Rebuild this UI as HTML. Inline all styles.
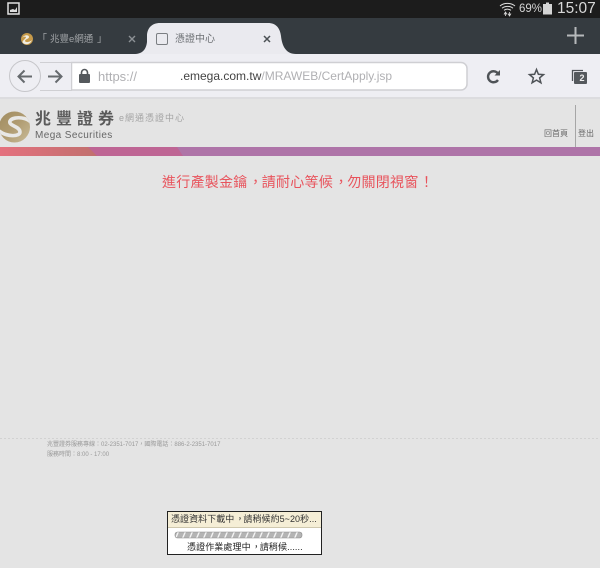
<!DOCTYPE html>
<html lang="zh-Hant"><head><meta charset="utf-8"><style>
html,body{margin:0;padding:0;background:#e4e4e4}
#r{position:relative;width:600px;height:568px;overflow:hidden;background:#e4e4e4;font-family:"Liberation Sans","Noto Sans CJK TC",sans-serif}
#r div{position:absolute;white-space:nowrap}
svg{position:absolute;left:0;top:0}
.c{position:relative;left:1px;top:0}
.d{position:relative;left:1px;top:0}
</style></head><body><div id="r">
<div style="left:0;top:0;width:600px;height:18px;background:#1c1c1c"></div>
<div style="left:0;top:18px;width:600px;height:36px;background:#353b40"></div>
<div style="left:0;top:54px;width:600px;height:44px;background:#eeeef3"></div>
<div style="left:0;top:97px;width:600px;height:2px;background:#dcdcdf"></div>
<svg width="600" height="568" viewBox="0 0 600 568">
<rect x="8" y="3" width="11" height="11" fill="#1c1c1c" stroke="#e2e2e2" stroke-width="1.5"/>
<path d="M10 12V10L13 9L15 10L17 7V12Z" fill="#ddd"/>
<path d="M134 54C142 54 146 50 147 42V36C147 28 152 23 160 23H268C276 23 280 28 281 36C282 46 286 54 296 54Z" fill="#eaeaef"/>
<circle cx="27" cy="39" r="6" fill="#c69a4a"/>
<path d="M22 38C25 34 29 35 29 37C29 39 25 39 25 41C26 43 30 42 32 40C30 45 25 45 23 43C21 41 26 39 26 37C25 36 23 37 22 38Z" fill="#f1ede2"/>
<path d="M129 36L135 42M135 36L129 42" stroke="#8d9195" stroke-width="1.4"/>
<path d="M264 36L270 42M270 36L264 42" stroke="#4b5054" stroke-width="1.5"/>
<rect x="156.500" y="33.500" width="11" height="11" rx="1.500" fill="none" stroke="#7b7e82" stroke-width="1"/>
<path d="M575.500 27V44M567 35.500H584" stroke="#b6b9bb" stroke-width="2"/>
<path d="M71.500 62.500H461a6 6 0 0 1 6 6V84a6 6 0 0 1-6 6H71.500Z" fill="#fff" stroke="#cfcfd3" stroke-width="1.500"/>
<path d="M40 62.500H71.500V90.500H40" fill="#eeeef3" stroke="#cfcfd3"/>
<circle cx="25" cy="76" r="15.500" fill="#eeeef3" stroke="#c6c6ca"/>
<path d="M32 76.500H19M24.500 70.500L18.500 76.500L24.500 82.500" fill="none" stroke="#666a6e" stroke-width="2"/>
<path d="M48 76.500H61M55.500 70.500L61.500 76.500L55.500 82.500" fill="none" stroke="#666a6e" stroke-width="2"/>
<rect x="79" y="74" width="11" height="9" rx="1" fill="#55595d"/>
<path d="M81.500 74V72.500a3 3 0 0 1 6 0V74" fill="none" stroke="#55595d" stroke-width="1.600"/>
<path d="M498 73.500A5.500 5.500 0 1 0 498 80" fill="none" stroke="#4f5357" stroke-width="2.400"/>
<path d="M494.500 75.500H500V70Z" fill="#4f5357"/>
<path d="M536.500 69.500L538.400 74.300L543.500 74.600L539.600 77.900L540.900 82.800L536.500 80.100L532.100 82.800L533.400 77.900L529.500 74.600L534.600 74.300Z" fill="none" stroke="#4f5357" stroke-width="1.500"/>
<path d="M572.500 81V70.500H583" fill="none" stroke="#4f5357" stroke-width="1.300"/>
<rect x="574" y="72" width="13" height="12" rx="1" fill="#55595d"/>
<path d="M500 6C504 2.500 511 2.500 515 6M502 8.300C505 5.800 510 5.800 513 8.300M504 10.300C506 8.800 509 8.800 511 10.300" fill="none" stroke="#ddd" stroke-width="1"/>
<path d="M505.500 12V16M504 14.500L505.500 12L507 14.500M509.500 12V16M508 13.500L509.500 16L511 13.500" fill="none" stroke="#ddd" stroke-width=".8"/>
<rect x="543" y="4" width="9" height="10.500" fill="#d4d4d4"/><rect x="546" y="2.500" width="3" height="1.500" fill="#d4d4d4"/>
<defs><linearGradient id="s" x1="0" x2="1" y1="0" y2="0"><stop offset="0" stop-color="#e4717e"/><stop offset="1" stop-color="#c1706e"/></linearGradient>
<linearGradient id="g" x1="0" x2="1" y1="0" y2="1"><stop offset="0" stop-color="#a08c60"/><stop offset=".5" stop-color="#b09c72"/><stop offset="1" stop-color="#c9bb98"/></linearGradient>
<clipPath id="c"><circle cx="14.500" cy="127" r="15.500"/></clipPath></defs>
<rect x="0" y="147" width="600" height="9" fill="#ae74a8"/>
<path d="M0 147H177L183 156H0Z" fill="#be6594"/>
<path d="M0 147H88L97 156H0Z" fill="url(#s)"/>
<circle cx="14.500" cy="127" r="15.500" fill="url(#g)"/>
<path clip-path="url(#c)" d="M31 122C24 116 12 117 10 121C8 126 20 126 20 132C20 137 7 137 -1 131" fill="none" stroke="#e8e8e6" stroke-width="3.600"/>
<rect x="575" y="105" width="1" height="42" fill="#a6a6a6"/>
<line x1="0" y1="438.500" x2="600" y2="438.500" stroke="#d2d2d2" stroke-dasharray="2 2"/>
<rect x="167.500" y="511.500" width="154" height="43" fill="#fff" stroke="#222" stroke-width="1"/>
<rect x="168" y="512" width="153" height="15" fill="#f5eed6"/>
<line x1="168" y1="527.500" x2="321" y2="527.500" stroke="#cfc8ae"/>
<defs><pattern id="p" width="7" height="6" patternUnits="userSpaceOnUse" patternTransform="translate(175 532)"><rect width="7" height="6" fill="#b4b4b4"/><path d="M0 6L2.500 0H4L1.500 6Z" fill="#f4f4f4"/></pattern></defs>
<rect x="175" y="532" width="127" height="6" rx="2.500" fill="url(#p)" stroke="#8a8a8a" stroke-width=".6"/>
</svg>
<div style="left:519px;top:1px;font-size:11.500px;line-height:16px;color:#d4d4d4">69%</div>
<div style="left:557px;top:0;font-size:15.500px;line-height:18px;color:#d8d8d8">15:07</div>
<div style="left:37px;top:33px;font-size:10px;line-height:14px;color:#a0a3a6">「</div>
<div style="left:50px;top:33px;font-size:9.500px;line-height:14px;color:#a0a3a6">兆豐e網通</div>
<div style="left:97px;top:33px;font-size:10px;line-height:14px;color:#a0a3a6">」</div>
<div style="left:175px;top:33px;font-size:10px;line-height:14px;color:#6e7175">憑證中心</div>
<div style="left:98px;top:69px;font-size:13px;line-height:15px;color:#b0b0b3">https://</div>
<div style="left:180px;top:69px;font-size:12px;line-height:15px;color:#444">.emega.com.tw<span style="color:#b0b0b3">/MRAWEB/CertApply.jsp</span></div>
<div style="left:577px;top:72px;width:10px;text-align:center;font-size:9px;font-weight:bold;line-height:12px;color:#eee">2</div>
<div style="left:35px;top:110px;font-size:16px;line-height:20px;font-weight:bold;color:#5a5a5a;letter-spacing:5px">兆豐證券</div>
<div style="left:35px;top:130px;font-size:10px;line-height:12px;color:#666;letter-spacing:.4px">Mega Securities</div>
<div style="left:119px;top:112px;font-size:9px;line-height:12px;color:#a4a4a4;letter-spacing:1px">e網通憑證中心</div>
<div style="left:544px;top:129px;font-size:8px;line-height:10px;color:#666">回首頁</div>
<div style="left:578px;top:129px;font-size:8px;line-height:10px;color:#666">登出</div>
<div style="left:162px;top:172px;font-size:14px;line-height:20px;color:#e8535c;letter-spacing:.25px">進行產製金鑰<span class="c">，</span>請耐心等候<span class="c">，</span>勿關閉視窗<span class="c">！</span></div>
<div style="left:47px;top:441px;font-size:6px;line-height:8px;color:#999">兆豐證券服務專線：02-2351-7017，國際電話：886-2-2351-7017</div>
<div style="left:47px;top:451px;font-size:6px;line-height:8px;color:#999">服務時間：8:00 - 17:00</div>
<div style="left:171px;top:513px;font-size:9px;line-height:12px;color:#333;letter-spacing:.05px">憑證資料下載中<span class="d">，</span>請稍候約5~20秒...</div>
<div style="left:187px;top:541px;font-size:9px;line-height:12px;color:#222;letter-spacing:.1px">憑證作業處理中<span class="d">，</span>請稍候......</div>
</div></body></html>
